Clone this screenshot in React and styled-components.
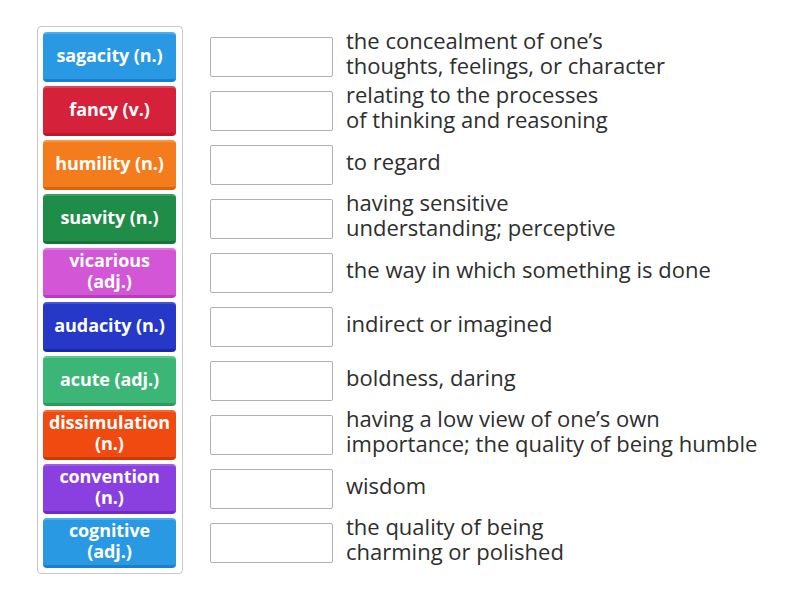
import React from 'react'
import styled, { createGlobalStyle } from 'styled-components'

const GlobalStyle = createGlobalStyle`
  body {
    margin: 0;
    background: #ffffff;
    font-family: "Open Sans", "DejaVu Sans", sans-serif;
  }
`

const Page = styled.div`
  display: flex;
  align-items: flex-start;
  padding: 26px 0 0 37px;
  gap: 27px;
`

const TileColumn = styled.div`
  display: flex;
  flex-direction: column;
  gap: 4px;
  width: 133px;
  padding: 5px 6px 5px 5px;
  border: 1px solid #c8c8c8;
  border-radius: 4px;
`

const Tile = styled.div`
  height: 50px;
  box-sizing: border-box;
  display: flex;
  align-items: center;
  justify-content: center;
  text-align: center;
  padding: 0 0 3px;
  border-radius: 4px;
  background: ${props => props.color};
  border-top: 2px solid ${props => props.light};
  border-bottom: 3px solid ${props => props.dark};
  color: #ffffff;
  font-weight: 700;
  font-size: 18px;
  line-height: 21px;
  letter-spacing: -0.1px;
`

const Answers = styled.div`
  display: flex;
  flex-direction: column;
  gap: 4px;
  padding-top: 6px;
`

const Row = styled.div`
  height: 50px;
  display: flex;
  align-items: center;
  gap: 13px;
`

const Slot = styled.div`
  width: 123px;
  height: 40px;
  box-sizing: border-box;
  border: 1px solid #b0b0b0;
  border-radius: 2px;
  background: #ffffff;
  flex-shrink: 0;
`

const Definition = styled.div`
  font-size: 22px;
  line-height: 25px;
  color: #2e2e2e;
  white-space: pre-line;
  margin-bottom: 8px;
`

const tiles = [
  { text: 'sagacity (n.)', color: '#2a99e4', light: '#48aeef', dark: '#1c7fcb' },
  { text: 'fancy (v.)', color: '#d5213a', light: '#e2445a', dark: '#b51a2f' },
  { text: 'humility (n.)', color: '#f57c1c', light: '#fa9640', dark: '#d8640e' },
  { text: 'suavity (n.)', color: '#1f8c48', light: '#35a35c', dark: '#16733a' },
  { text: 'vicarious\n(adj.)', color: '#d356d6', light: '#e07ae2', dark: '#b83dbd' },
  { text: 'audacity (n.)', color: '#2538c8', light: '#4254d8', dark: '#1a29a8' },
  { text: 'acute (adj.)', color: '#3cb676', light: '#5ec98f', dark: '#2a9a5f' },
  { text: 'dissimulation\n(n.)', color: '#f04a10', light: '#f76a34', dark: '#cc3a08' },
  { text: 'convention\n(n.)', color: '#8a3fe0', light: '#9d5cea', dark: '#6f2bc4' },
  { text: 'cognitive\n(adj.)', color: '#2a99e4', light: '#48aeef', dark: '#1c7fcb' },
]

const definitions = [
  'the concealment of one\u2019s\nthoughts, feelings, or character',
  'relating to the processes\nof thinking and reasoning',
  'to regard',
  'having sensitive\nunderstanding; perceptive',
  'the way in which something is done',
  'indirect or imagined',
  'boldness, daring',
  'having a low view of one\u2019s own\nimportance; the quality of being humble',
  'wisdom',
  'the quality of being\ncharming or polished',
]

const TileText = styled.span`
  white-space: pre-line;
`

export default function App() {
  return (
    <>
      <GlobalStyle />
      <Page>
        <TileColumn>
          {tiles.map(t => (
            <Tile key={t.text} color={t.color} light={t.light} dark={t.dark}>
              <TileText>{t.text}</TileText>
            </Tile>
          ))}
        </TileColumn>
        <Answers>
          {definitions.map(d => (
            <Row key={d}>
              <Slot />
              <Definition>{d}</Definition>
            </Row>
          ))}
        </Answers>
      </Page>
    </>
  )
}
